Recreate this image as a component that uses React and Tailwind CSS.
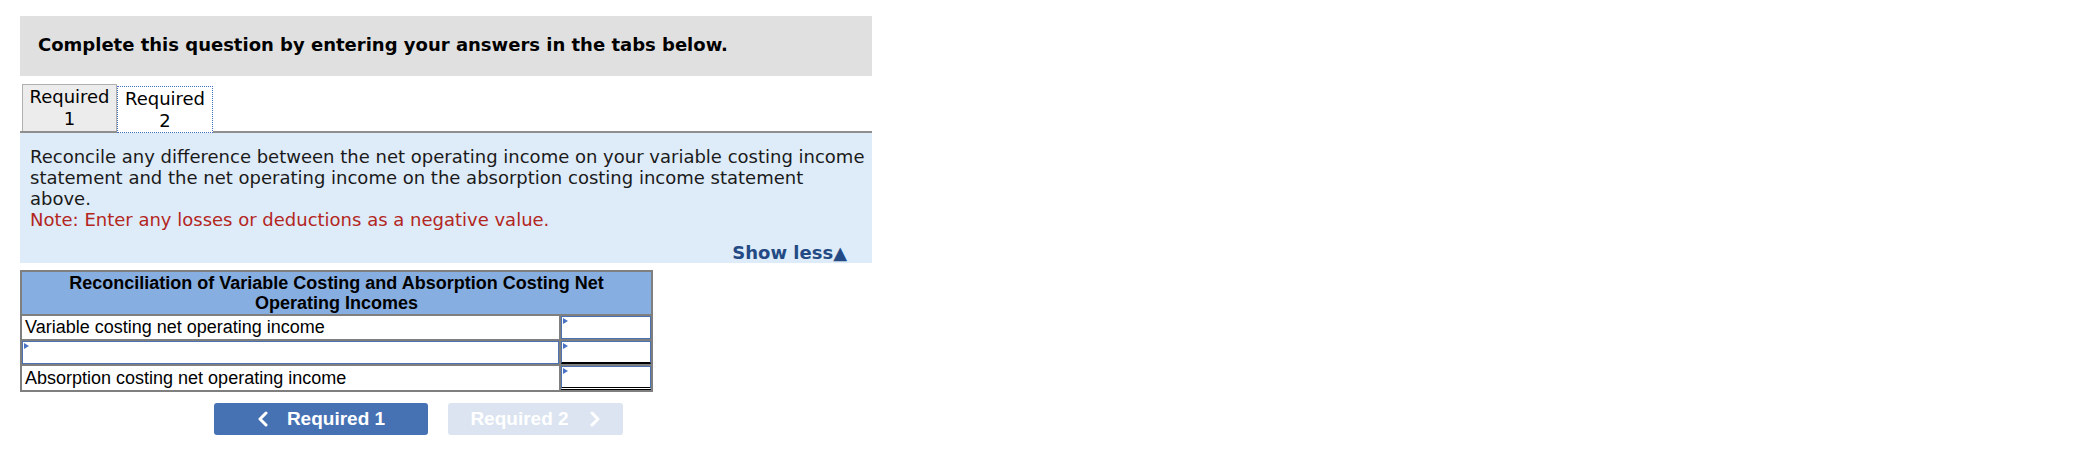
const verdana = { fontFamily: '"DejaVu Sans", Verdana, sans-serif' }
const arial = { fontFamily: '"Liberation Sans", Arial, sans-serif' }

function Flag() {
  return (
    <span className="absolute left-[1px] top-[1px] w-0 h-0 border-l-[5px] border-l-[#4a72c4] border-y-[3px] border-y-transparent" />
  )
}

function AmountCell({ bottom }) {
  return (
    <div className={`relative w-[90px] bg-white border border-[#4a72b0] ${bottom}`}>
      <Flag />
    </div>
  )
}

function Chevron({ dir }) {
  return (
    <svg width="12" height="16" viewBox="0 0 12 16" fill="none" stroke="currentColor" strokeWidth="3" strokeLinecap="round" strokeLinejoin="round">
      {dir === 'left' ? <polyline points="9,2 3,8 9,14" /> : <polyline points="3,2 9,8 3,14" />}
    </svg>
  )
}

export default function App() {
  return (
    <div className="min-h-screen bg-white pl-[20px] pt-[16px]">
      <div className="w-[852px]">
        <div style={verdana} className="h-[60px] bg-[#e0e0e0] flex items-center pl-[18px] pb-[4px] text-[18px] font-bold text-black">
          Complete this question by entering your answers in the tabs below.
        </div>

        <div style={verdana} className="mt-[8px] flex items-end border-b-2 border-[#8f8f8f] pl-[2px] text-[18px] leading-[22px] text-black">
          <div className="w-[95px] h-[47px] bg-[#ececec] border border-b-0 border-[#b0b0b0] flex flex-col items-center justify-center">
            <span>Required</span>
            <span>1</span>
          </div>
          <div className="w-[96px] h-[47px] bg-white border border-dotted border-[#3f6fc2] flex flex-col items-center justify-center -mb-[2px]">
            <span>Required</span>
            <span>2</span>
          </div>
        </div>

        <div style={verdana} className="bg-[#deebf8] pl-[10px] pr-[25px] pt-[13px] text-[18px] leading-[21px] text-[#1a1a1a]">
          <p className="w-[842px]">
            Reconcile any difference between the net operating income on your variable costing income<br />
            statement and the net operating income on the absorption costing income statement<br />
            above.
          </p>
          <p className="text-[#b3261e]">Note: Enter any losses or deductions as a negative value.</p>
          <div className="mt-[12px] flex justify-end">
            <span className="font-bold text-[#234a84]">Show less▲</span>
          </div>
        </div>

        <div style={arial} className="mt-[7px] w-[633px] bg-[#7f7f7f] p-[2px] flex flex-col gap-[2px] text-[18px] text-black">
          <div className="bg-[#86aee0] px-2 py-[1px] text-center font-bold leading-[20px]">
            Reconciliation of Variable Costing and Absorption Costing Net<br />
            Operating Incomes
          </div>
          <div className="flex gap-[2px] h-[23px]">
            <div className="flex-1 bg-white px-[3px] leading-[23px]">Variable costing net operating income</div>
            <AmountCell bottom="" />
          </div>
          <div className="flex gap-[2px] h-[23px]">
            <div className="relative flex-1 bg-white border border-[#4a72b0]">
              <Flag />
            </div>
            <AmountCell bottom="border-b-2 border-b-black" />
          </div>
          <div className="flex gap-[2px] h-[24px]">
            <div className="flex-1 bg-white px-[3px] leading-[24px]">Absorption costing net operating income</div>
            <AmountCell bottom="border-b-[3px] border-double border-b-black" />
          </div>
        </div>

        <div style={arial} className="mt-[11px] flex gap-[20px] pl-[194px] text-[19px] font-bold text-white">
          <button className="w-[214px] h-[32px] rounded-[3px] bg-[#4672b4] flex items-center justify-center gap-[18px]">
            <Chevron dir="left" />
            <span>Required 1</span>
          </button>
          <button className="w-[175px] h-[32px] rounded-[3px] bg-[#dbe4f0] flex items-center justify-center gap-[20px]">
            <span>Required 2</span>
            <Chevron dir="right" />
          </button>
        </div>
      </div>
    </div>
  )
}
